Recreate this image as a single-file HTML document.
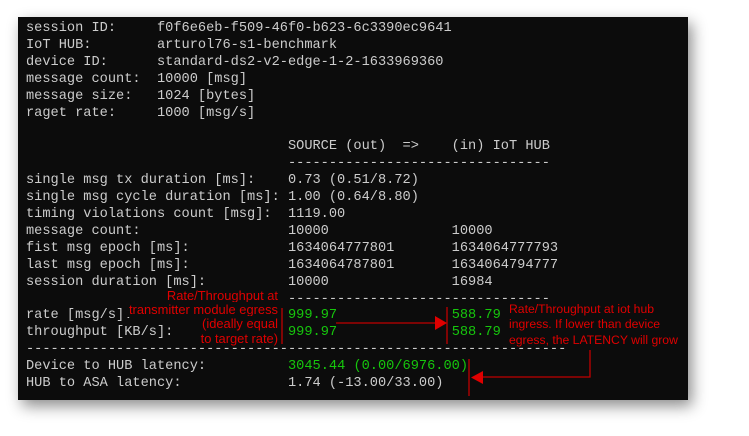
<!DOCTYPE html>
<html><head><meta charset="utf-8"><style>
html,body{margin:0;padding:0;background:#fff;width:749px;height:436px;overflow:hidden;position:relative}
#term{position:absolute;left:18px;top:17px;width:670px;height:383px;background:#0c0c0c;box-shadow:4px 6px 14px rgba(0,0,0,.45)}
pre{position:absolute;left:26px;top:21px;margin:0;font-family:"Liberation Mono",monospace;font-size:13.65px;line-height:16.9px;color:#cccccc}
.g{color:#16c60c}
.r{position:absolute;font-family:"Liberation Sans",sans-serif;font-size:12.9px;line-height:14.2px;color:#e00000;white-space:nowrap}
.r span{background:#0c0c0c;padding-left:2px}
</style></head><body>
<div id="term"></div>
<pre>session ID:     f0f6e6eb-f509-46f0-b623-6c3390ec9641
IoT HUB:        arturol76-s1-benchmark
device ID:      standard-ds2-v2-edge-1-2-1633969360
message count:  10000 [msg]
message size:   1024 [bytes]
raget rate:     1000 [msg/s]

                                SOURCE (out)  =>    (in) IoT HUB
                                --------------------------------
single msg tx duration [ms]:    0.73 (0.51/8.72)
single msg cycle duration [ms]: 1.00 (0.64/8.80)
timing violations count [msg]:  1119.00
message count:                  10000               10000
fist msg epoch [ms]:            1634064777801       1634064777793
last msg epoch [ms]:            1634064787801       1634064794777
session duration [ms]:          10000               16984
                                --------------------------------
rate [msg/s]:                   <span class="g">999.97</span>              <span class="g">588.79</span>
throughput [KB/s]:              <span class="g">999.97</span>              <span class="g">588.79</span>
------------------------------------------------------------------
Device to HUB latency:          <span class="g">3045.44 (0.00/6976.00)</span>
HUB to ASA latency:             1.74 (-13.00/33.00)</pre>
<div class="r" style="right:471px;top:289px;text-align:right"><span>Rate/Throughput at</span><br><span>transmitter module egress</span><br><span>(ideally equal</span><br><span>to target rate)</span></div>
<div class="r" style="left:509px;top:302px;line-height:15.3px;font-size:12.2px">Rate/Throughput at iot hub<br>ingress. If lower than device<br>egress, the LATENCY will grow</div>
<svg style="position:absolute;left:0;top:0" width="749" height="436">
<g stroke="#c00000" stroke-width="1.3" fill="none">
<line x1="282" y1="308" x2="282" y2="344"/>
<line x1="447" y1="307" x2="447" y2="344"/>
<line x1="336" y1="323" x2="436" y2="323"/>
<line x1="469" y1="359" x2="469" y2="396"/>
<polyline points="590,350 590,377 481,377"/>
</g>
<polygon points="435,316 447,323 435,330" fill="#e00000"/>
<polygon points="483,371 471,377.5 483,384" fill="#e00000"/>
</svg>
</body></html>
